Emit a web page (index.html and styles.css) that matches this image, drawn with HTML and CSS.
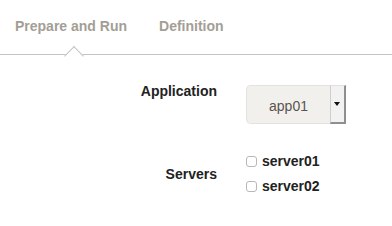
FILE: index.html
```html
<!DOCTYPE html>
<html>
<head>
<meta charset="utf-8">
<link rel="stylesheet" href="styles.css">
</head>
<body>
<div class="tabs">
  <div class="tab active">Prepare and Run</div>
  <div class="tab">Definition</div>
</div>
<div class="form">
  <div class="label">Application</div>
  <div class="control">
    <div class="select">
      <div class="select-value">app01</div>
      <div class="select-btn"><span class="arrow"></span></div>
    </div>
  </div>
  <div class="label servers-label">Servers</div>
  <div class="control checks">
    <label class="check"><span class="box"></span>server01</label>
    <label class="check"><span class="box"></span>server02</label>
  </div>
</div>
</body>
</html>
```
FILE: styles.css
```css
html, body {
  margin: 0;
  padding: 0;
  background: #fff;
  font-family: "Liberation Sans", Arial, sans-serif;
}
.tabs {
  display: flex;
  gap: 32px;
  padding: 18px 15px 0;
  height: 36px;
  border-bottom: 1px solid #c4c4c4;
}
.tab {
  position: relative;
  font-size: 14px;
  line-height: 16px;
  font-weight: bold;
  color: #a39e95;
}
.tab.active::after {
  content: "";
  position: absolute;
  left: 52px;
  top: 31px;
  width: 13px;
  height: 13px;
  background: #fff;
  border-top: 1px solid #c4c4c4;
  border-left: 1px solid #c4c4c4;
  transform: rotate(45deg);
}
.form {
  display: grid;
  grid-template-columns: 217px auto;
  column-gap: 29px;
  row-gap: 0;
  margin-top: 28px;
}
.label {
  text-align: right;
  font-size: 14px;
  line-height: 16px;
  font-weight: bold;
  color: #222;
}
.select {
  margin-top: 2px;
  display: flex;
  width: 100px;
  height: 39px;
}
.select-value {
  flex: 1;
  background: #f1f0ed;
  border: 1px solid #e4e2de;
  border-right: none;
  border-radius: 5px 0 0 5px;
  font-size: 14px;
  color: #5a544e;
  display: flex;
  align-items: center;
  justify-content: center;
  padding-top: 2px;
  box-sizing: border-box;
}
.select-btn {
  background: #f2f2f2;
  border-left: 1px solid #cfcfcf;
  border-right: 2px solid #8f8f8f;
  border-bottom: 2px solid #8f8f8f;
  border-top: 1px solid #e0e0e0;
  box-sizing: border-box;
  width: 16px;
  display: flex;
  align-items: center;
  justify-content: center;
}
.arrow {
  width: 0;
  height: 0;
  border-left: 3px solid transparent;
  border-right: 3px solid transparent;
  border-top: 4px solid #111;
  margin-left: -1px;
}
.servers-label {
  margin-top: 42px;
}
.checks {
  margin-top: 29px;
  display: flex;
  flex-direction: column;
  gap: 9px;
}
.check {
  display: flex;
  align-items: center;
  gap: 5px;
  font-size: 14px;
  line-height: 16px;
  font-weight: bold;
  color: #222;
}
.box {
  width: 11px;
  height: 11px;
  border: 1px solid #b8b8b8;
  border-radius: 3px;
  background: #fff;
  box-sizing: border-box;
  margin-top: 1px;
}
```
